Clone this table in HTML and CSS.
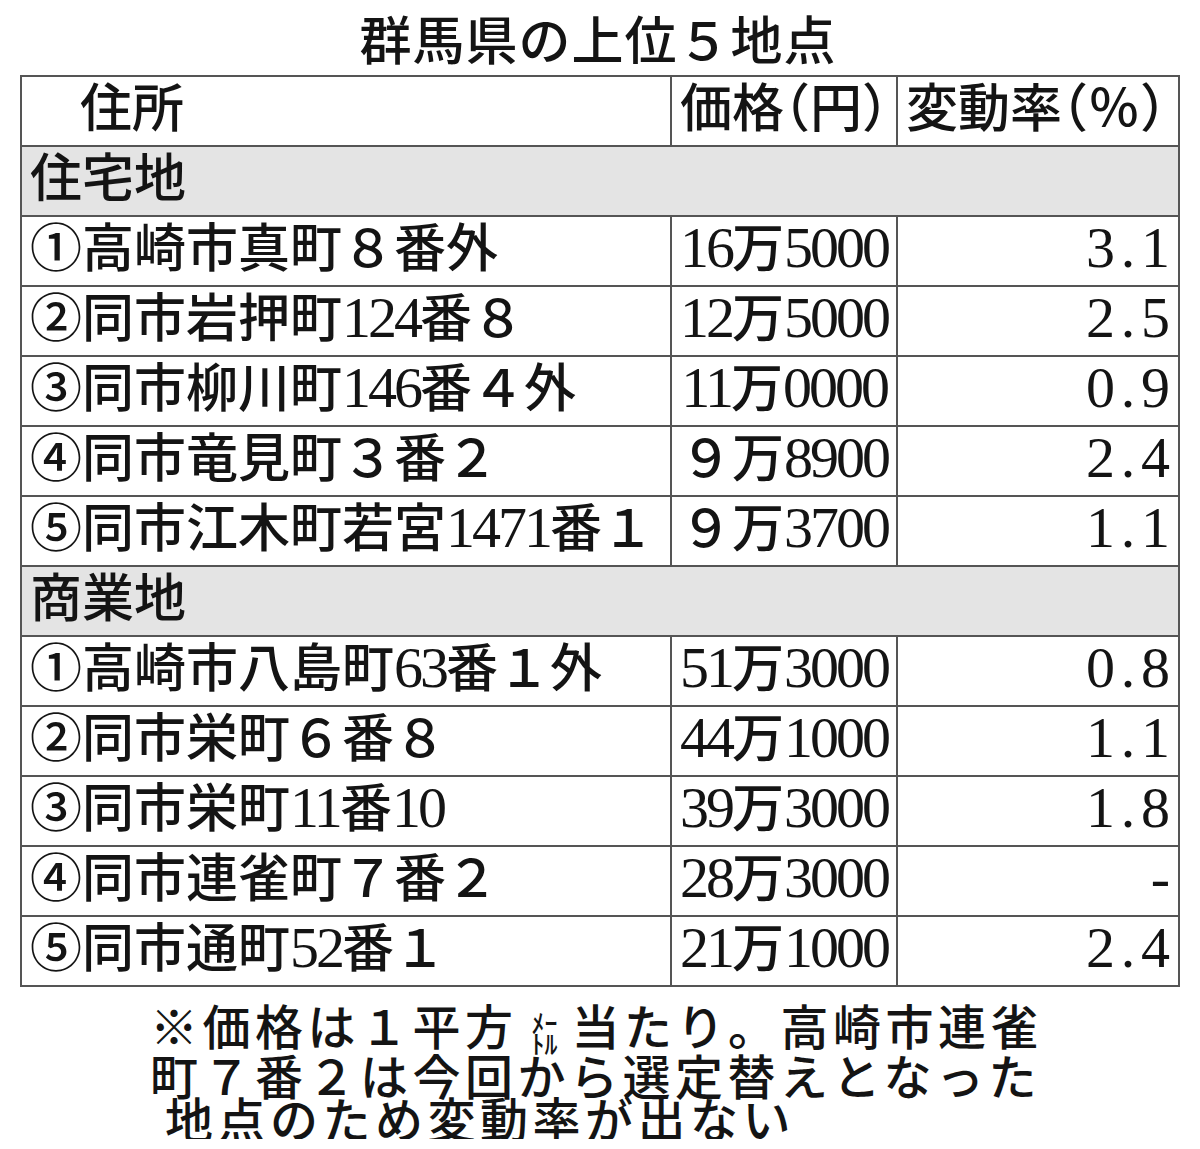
FILE: index.html
```html
<!DOCTYPE html>
<html lang="ja">
<head>
<meta charset="utf-8">
<title>群馬県の上位５地点</title>
<link rel="stylesheet" href="styles.css">
</head>
<body>
<div class="page">
  <h1 class="title">群馬県の上位５地点</h1>
  <table class="land">
    <colgroup>
      <col class="c-addr">
      <col class="c-price">
      <col class="c-rate">
    </colgroup>
    <thead>
      <tr class="head">
        <th class="h-addr">住所</th>
        <th class="h-price">価格（円）</th>
        <th class="h-rate">変動率（％）</th>
      </tr>
    </thead>
    <tbody>
      <tr class="group"><td colspan="3">住宅地</td></tr>
      <tr><td class="addr">①高崎市真町８番外</td><td class="price"><span class="d">16</span>万<span class="d">5000</span></td><td class="rate"><span class="d">3<span class="dot">.</span>1</span></td></tr>
      <tr><td class="addr">②同市岩押町<span class="d">124</span>番８</td><td class="price"><span class="d">12</span>万<span class="d">5000</span></td><td class="rate"><span class="d">2<span class="dot">.</span>5</span></td></tr>
      <tr><td class="addr">③同市柳川町<span class="d">146</span>番４外</td><td class="price"><span class="d">11</span>万<span class="d">0000</span></td><td class="rate"><span class="d">0<span class="dot">.</span>9</span></td></tr>
      <tr><td class="addr">④同市竜見町３番２</td><td class="price">９万<span class="d">8900</span></td><td class="rate"><span class="d">2<span class="dot">.</span>4</span></td></tr>
      <tr><td class="addr">⑤同市江木町若宮<span class="d">1471</span>番１</td><td class="price">９万<span class="d">3700</span></td><td class="rate"><span class="d">1<span class="dot">.</span>1</span></td></tr>
      <tr class="group"><td colspan="3">商業地</td></tr>
      <tr><td class="addr">①高崎市八島町<span class="d">63</span>番１外</td><td class="price"><span class="d">51</span>万<span class="d">3000</span></td><td class="rate"><span class="d">0<span class="dot">.</span>8</span></td></tr>
      <tr><td class="addr">②同市栄町６番８</td><td class="price"><span class="d">44</span>万<span class="d">1000</span></td><td class="rate"><span class="d">1<span class="dot">.</span>1</span></td></tr>
      <tr><td class="addr">③同市栄町<span class="d">11</span>番<span class="d">10</span></td><td class="price"><span class="d">39</span>万<span class="d">3000</span></td><td class="rate"><span class="d">1<span class="dot">.</span>8</span></td></tr>
      <tr><td class="addr">④同市連雀町７番２</td><td class="price"><span class="d">28</span>万<span class="d">3000</span></td><td class="rate"><span class="d">-</span></td></tr>
      <tr><td class="addr">⑤同市通町<span class="d">52</span>番１</td><td class="price"><span class="d">21</span>万<span class="d">1000</span></td><td class="rate"><span class="d">2<span class="dot">.</span>4</span></td></tr>
    </tbody>
  </table>
  <div class="note">
    <div class="note-line">※価格は１平方<span class="unit"><span>ﾒｰ</span><span>ﾄﾙ</span></span>当たり。高崎市連雀</div>
    <div class="note-line">町７番２は今回から選定替えとなった</div>
    <div class="note-line indent">地点のため変動率が出ない</div>
  </div>
</div>
</body>
</html>
```
FILE: styles.css
```css
html, body {
  margin: 0;
  padding: 0;
  background: #ffffff;
}

body {
  color: #141414;
  font-family: "Noto Sans CJK JP", sans-serif;
}

.page {
  width: 1200px;
  padding: 0 0 0 20px;
  box-sizing: border-box;
}

.title {
  margin: 0;
  width: 1156px;
  height: 75px;
  line-height: 75px;
  text-align: center;
  font-weight: 500;
  font-size: 52px;
  letter-spacing: 1px;
}

.land {
  border-collapse: collapse;
  table-layout: fixed;
  width: 1158px;
  border: 2px solid #4a4a4a;
}

.c-addr { width: 650px; }
.c-price { width: 226px; }
.c-rate { width: 282px; }

.land th,
.land td {
  height: 68px;
  padding: 0 8px 12px;
  box-sizing: border-box;
  border: 2px solid #555555;
  font-size: 52px;
  font-weight: 500;
  line-height: 56px;
  white-space: nowrap;
  vertical-align: middle;
}

.land th {
  font-feature-settings: "halt";
  text-align: left;
}

.land .h-addr {
  padding-left: 58px;
}

.group td {
  background: #e4e4e4;
  padding-left: 8px;
}

.land td.price {
  text-align: right;
  padding-right: 9px;
}

.land td.rate {
  text-align: right;
  padding-right: 11px;
}

.d {
  font-family: "Liberation Serif", serif;
  font-weight: 400;
  font-size: 58px;
  letter-spacing: -3px;
  line-height: 50px;
}

.dot {
  display: inline-block;
  width: 29px;
  text-align: center;
}

.note {
  margin-top: 16px;
  padding-left: 130px;
  font-size: 48px;
  font-weight: 500;
  line-height: 43px;
  letter-spacing: 4.5px;
}

.note-line {
  white-space: nowrap;
}

.indent {
  padding-left: 15px;
}

.unit {
  display: inline-flex;
  flex-direction: column;
  vertical-align: middle;
  align-items: center;
  width: 54px;
  font-size: 26px;
  line-height: 21px;
  letter-spacing: 0;
}
```
